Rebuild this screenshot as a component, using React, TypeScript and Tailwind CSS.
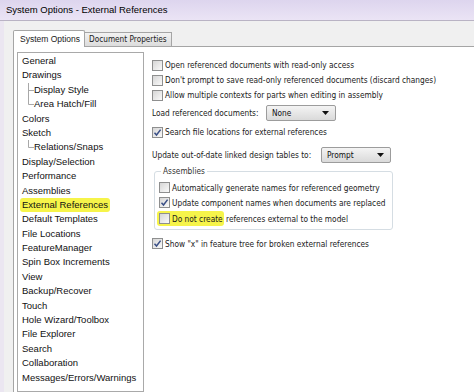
import React from 'react';

const panelFont = "font-['DejaVu_Sans_Condensed','DejaVu_Sans',sans-serif] text-[8.25px] text-[#1a1a1a]";
const listFont = "font-['Liberation_Sans',sans-serif] text-[9.5px] text-[#111]";

function Checkbox({ checked = false }: { checked?: boolean }) {
  return (
    <span className="inline-flex h-[11px] w-[11px] shrink-0 items-center justify-center border border-[#8e8f8f] bg-linear-to-br from-[#d6d6d6] to-[#fafafa]">
      {checked ? (
        <svg width="9" height="9" viewBox="0 0 9 9">
          <path d="M1.5 4.8 L3.5 7 L7.6 1.6" fill="none" stroke="#3a4f86" strokeWidth="1.5" />
        </svg>
      ) : null}
    </span>
  );
}

function CheckRow({
  label,
  checked,
  className = '',
}: {
  label: React.ReactNode;
  checked?: boolean;
  className?: string;
}) {
  return (
    <div className={`flex h-[15px] items-center gap-[2px] whitespace-nowrap ${className}`}>
      <Checkbox checked={checked} />
      <span>{label}</span>
    </div>
  );
}

function Dropdown({ value }: { value: string }) {
  return (
    <span className="inline-flex h-[16px] w-[70px] shrink-0 items-center justify-between rounded-[2px] border border-[#9c9c9c] bg-linear-to-b from-[#f4f4f4] to-[#dadada] pl-[5px] pr-[6px]">
      <span className="text-[#111]">{value}</span>
      <svg width="7" height="4" viewBox="0 0 7 4">
        <path d="M0 0 H7 L3.5 4 Z" fill="#111" />
      </svg>
    </span>
  );
}

function TreeGuide({ last }: { last?: boolean }) {
  return (
    <svg width="6" height="14.4" viewBox="0 0 6 14.4" className="shrink-0">
      <path d={last ? 'M0.5 0 V7.5 H6' : 'M0.5 0 V14.4 M0.5 7.5 H6'} fill="none" stroke="#a8a8a8" strokeWidth="1" />
    </svg>
  );
}

const navItems: { label: string; child?: boolean; last?: boolean; mark?: boolean }[] = [
  { label: 'General' },
  { label: 'Drawings' },
  { label: 'Display Style', child: true },
  { label: 'Area Hatch/Fill', child: true, last: true },
  { label: 'Colors' },
  { label: 'Sketch' },
  { label: 'Relations/Snaps', child: true, last: true },
  { label: 'Display/Selection' },
  { label: 'Performance' },
  { label: 'Assemblies' },
  { label: 'External References', mark: true },
  { label: 'Default Templates' },
  { label: 'File Locations' },
  { label: 'FeatureManager' },
  { label: 'Spin Box Increments' },
  { label: 'View' },
  { label: 'Backup/Recover' },
  { label: 'Touch' },
  { label: 'Hole Wizard/Toolbox' },
  { label: 'File Explorer' },
  { label: 'Search' },
  { label: 'Collaboration' },
  { label: 'Messages/Errors/Warnings' },
];

export default function App() {
  return (
    <div className="flex h-[392px] w-[474px] flex-col overflow-hidden bg-[#f0f0f0]">
      <div className="flex h-[21px] shrink-0 items-center border-b border-[#b9b3c4] bg-linear-to-b from-[#ddd5ee] to-[#ebe4f5] pl-[6px] font-['Liberation_Sans',sans-serif] text-[9.5px] text-black">
        System Options - External References
      </div>

      <div className="flex min-h-0 flex-1">
        <div className="w-[4px] shrink-0 bg-[#ebe6f1]" />
        <div className="flex min-w-0 flex-1 flex-col pl-[9px]">
          <div className="flex h-[25px] shrink-0 items-end">
            <div className="relative z-10 -mb-px flex h-[17px] items-center rounded-t-[2px] border border-b-0 border-[#a5a5a5] bg-white pl-[6px] pr-[4px] font-['Liberation_Sans',sans-serif] text-[8.5px] text-[#1a1a1a]">
              System Options
            </div>
            <div className="flex h-[14px] items-center border border-b-0 border-l-0 border-[#a5a5a5] bg-linear-to-b from-[#f2f2f2] to-[#dcdcdc] px-[4px] font-['DejaVu_Sans_Condensed',sans-serif] text-[8.2px] text-[#1a1a1a]">
              Document Properties
            </div>
          </div>

          <div className="flex min-h-0 flex-1 border-l border-t border-[#a5a5a5] bg-white">
            <div className={`ml-[3px] mt-[5px] w-[127px] shrink-0 border border-[#a9a9a9] bg-white pl-[4px] pt-px ${listFont}`}>
              {navItems.map((item) => (
                <div key={item.label} className="flex h-[14.4px] items-center whitespace-nowrap leading-[14.4px]">
                  {item.child ? (
                    <>
                      <span className="w-[6px] shrink-0" />
                      <TreeGuide last={item.last} />
                    </>
                  ) : null}
                  <span className={item.mark ? '-mx-[2px] rounded-[3px] bg-[#f6f44a] px-[2px]' : ''}>{item.label}</span>
                </div>
              ))}
            </div>

            <div className={`flex w-[320px] shrink-0 flex-col pl-[8px] pt-[11px] ${panelFont}`}>
              <CheckRow label="Open referenced documents with read-only access" />
              <CheckRow label="Don't prompt to save read-only referenced documents (discard changes)" />
              <CheckRow label="Allow multiple contexts for parts when editing in assembly" />
              <div className="mt-[2px] flex h-[16px] items-center whitespace-nowrap">
                <span className="w-[114px] shrink-0">Load referenced documents:</span>
                <Dropdown value="None" />
              </div>
              <CheckRow label="Search file locations for external references" checked className="mt-[4px]" />
              <div className="mt-[7px] flex h-[16px] items-center whitespace-nowrap">
                <span className="w-[169px] shrink-0">Update out-of-date linked design tables to:</span>
                <Dropdown value="Prompt" />
              </div>
              <fieldset className="ml-[2px] mt-[2px] w-[239px] rounded-[3px] border border-[#d5dde3] px-[4px] pb-[3px]">
                <legend className="ml-[2px] px-[2px] text-[#333]">Assemblies</legend>
                <div className="flex flex-col pt-[3px]">
                  <CheckRow label="Automatically generate names for referenced geometry" />
                  <CheckRow label="Update component names when documents are replaced" checked />
                  <div className="mt-[1px] flex h-[15px] items-center whitespace-nowrap">
                    <span className="-ml-[2px] flex h-[15px] items-center gap-[2px] rounded-[3px] bg-[#f6f44a] pl-[2px] pr-[1px]">
                      <Checkbox />
                      <span>Do not create</span>
                    </span>
                    <span>&nbsp;references external to the model</span>
                  </div>
                </div>
              </fieldset>
              <CheckRow label={'Show "x" in feature tree for broken external references'} checked className="mt-[6px]" />
            </div>
          </div>
        </div>
      </div>
    </div>
  );
}
